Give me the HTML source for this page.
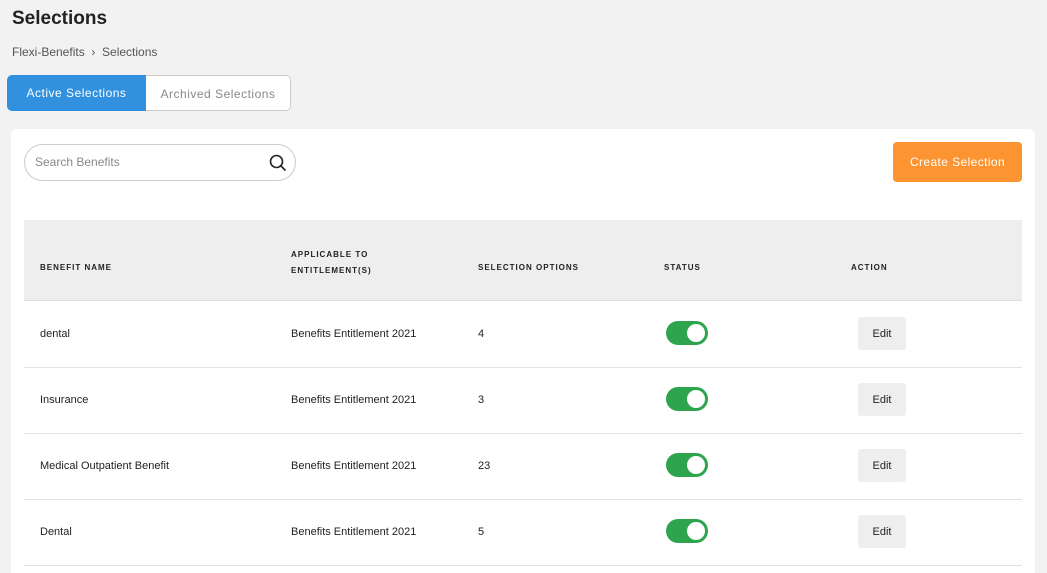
<!DOCTYPE html>
<html><head><style>
html,body{margin:0;width:1047px;height:573px;overflow:hidden}
body{background:#f2f2f2;font-family:"Liberation Sans",sans-serif;color:#222;position:relative}
.a{position:absolute}
h1{position:absolute;left:12px;top:8px;margin:0;font-size:19px;font-weight:bold;color:#222}
.bc{left:12px;top:45px;font-size:12px;color:#555}
.tab{top:75px;height:36px;line-height:36px;font-size:12px;letter-spacing:.5px;text-align:center;box-sizing:border-box}
.card{left:11px;top:129px;width:1024px;height:444px;background:#fff;border-radius:6px 6px 0 0}
.search{left:24px;top:144px;width:272px;height:37px;border:1px solid #ccc;border-radius:19px;box-sizing:border-box}
.btn{left:893px;top:142px;width:129px;height:40px;background:#fb9431;color:#fff;border-radius:4px;font-size:12px;text-align:center;line-height:40px;letter-spacing:.4px}
.th{left:24px;top:220px;width:998px;height:80px;background:#eee;border-bottom:1px solid #ddd}
.hd{font-size:8px;font-weight:bold;letter-spacing:1px;color:#222}
.row{left:24px;width:998px;height:66px;border-bottom:1px solid #e2e2e2;font-size:11px}
.row span{position:absolute;top:27px}
.tg{position:absolute;left:642px;top:20px;width:42px;height:24px;border-radius:12px;background:#2ea44f}
.tg:after{content:"";position:absolute;right:3px;top:3px;width:18px;height:18px;border-radius:50%;background:#fff}
.ed{position:absolute;left:834px;top:16px;width:48px;height:33px;background:#eee;border-radius:3px;text-align:center;line-height:35px;font-size:11px}
</style></head><body>
<h1>Selections</h1>
<div class="a bc">Flexi-Benefits &nbsp;&#8250;&nbsp; Selections</div>
<div class="a tab" style="left:7px;width:139px;background:#3191df;color:#fff;border-radius:5px 0 0 5px">Active Selections</div>
<div class="a tab" style="left:146px;width:145px;background:#fff;color:#888;border:1px solid #ccc;border-left:none;border-radius:0 5px 5px 0">Archived Selections</div>
<div class="a card"></div>
<div class="a search"><span class="a" style="left:10px;top:10px;font-size:12px;color:#888">Search Benefits</span>
<svg class="a" style="left:244px;top:9px" width="18" height="18" viewBox="0 0 18 18"><circle cx="7.5" cy="7.5" r="6" fill="none" stroke="#222" stroke-width="1.6"/><path d="M12 12l4.5 4.5" stroke="#222" stroke-width="1.6"/></svg></div>
<div class="a btn">Create Selection</div>
<div class="a th">
<span class="a hd" style="left:16px;top:43px">BENEFIT NAME</span>
<span class="a hd" style="left:267px;top:27px;line-height:16px">APPLICABLE TO<br>ENTITLEMENT(S)</span>
<span class="a hd" style="left:454px;top:43px">SELECTION OPTIONS</span>
<span class="a hd" style="left:640px;top:43px">STATUS</span>
<span class="a hd" style="left:827px;top:43px">ACTION</span>
</div>
<div class="a row" style="top:301px"><span style="left:16px">dental</span><span style="left:267px">Benefits Entitlement 2021</span><span style="left:454px">4</span><div class="tg"></div><div class="ed">Edit</div></div>
<div class="a row" style="top:367px"><span style="left:16px">Insurance</span><span style="left:267px">Benefits Entitlement 2021</span><span style="left:454px">3</span><div class="tg"></div><div class="ed">Edit</div></div>
<div class="a row" style="top:433px"><span style="left:16px">Medical Outpatient Benefit</span><span style="left:267px">Benefits Entitlement 2021</span><span style="left:454px">23</span><div class="tg"></div><div class="ed">Edit</div></div>
<div class="a row" style="top:499px"><span style="left:16px">Dental</span><span style="left:267px">Benefits Entitlement 2021</span><span style="left:454px">5</span><div class="tg"></div><div class="ed">Edit</div></div>
</body></html>
